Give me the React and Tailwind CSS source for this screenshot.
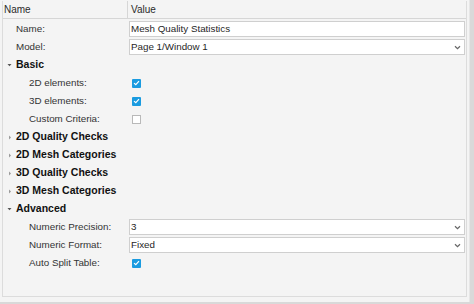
import React from 'react';

const font = { fontFamily: '"Liberation Sans", Arial, sans-serif' };

function Chevron() {
  return (
    <svg width="7" height="5" viewBox="0 0 7 5" className="mr-[3px] shrink-0">
      <path d="M1 1.2 L3.5 3.6 L6 1.2" fill="none" stroke="#666" strokeWidth="1.2" />
    </svg>
  );
}

function Check({ checked }) {
  if (!checked) {
    return <div className="ml-[3px] h-[9px] w-[9px] border border-[#b9b9b9] bg-white" />;
  }
  return (
    <div className="ml-[3px] flex h-[9px] w-[9px] items-center justify-center rounded-[1px] bg-[#1a9be0]">
      <svg width="7" height="6" viewBox="0 0 7 6">
        <path d="M1 3.1 L2.8 4.7 L6 1.2" fill="none" stroke="#fff" strokeWidth="1.2" />
      </svg>
    </div>
  );
}

function Field({ value, select }) {
  return (
    <div className="flex h-[16px] flex-1 items-center justify-between border border-[#cfcfcf] bg-white pl-[1px] text-[9.8px] text-[#1f1f1f]">
      <span>{value}</span>
      {select && <Chevron />}
    </div>
  );
}

function Row({ label, indent, children }) {
  return (
    <div className="flex h-[18px] items-center">
      <div className={`w-[126px] shrink-0 text-[9.8px] text-[#333] ${indent ? 'pl-[26px]' : 'pl-[13px]'}`}>{label}</div>
      <div className="flex flex-1 items-center pr-[1px]">{children}</div>
    </div>
  );
}

function Group({ title, open }) {
  return (
    <div className="flex h-[18px] items-center">
      <div className="flex w-[13px] justify-center">
        {open ? (
          <svg width="5" height="4" viewBox="0 0 5 4"><path d="M0.5 1 L4.5 1 L2.5 3.2 Z" fill="#555" /></svg>
        ) : (
          <svg width="4" height="5" viewBox="0 0 4 5"><path d="M1 0.5 L3 2.5 L1 4.5 Z" fill="#999" /></svg>
        )}
      </div>
      <span className="text-[10.5px] font-bold text-[#111]">{title}</span>
    </div>
  );
}

export default function App() {
  return (
    <div style={font} className="h-[304px] w-[474px] bg-[#d9d9d9]">
      <div className="h-[302px] w-[470px] border-r border-[#e6e6e6] bg-[#f4f4f4] pl-[2px] pt-[1px]">
        <div className="h-[296px] w-[465px] border-b border-l border-r border-[#dcdcdc] border-t-[#e2e2e2]">
          <div className="flex h-[18px] items-center border-b border-[#d6d6d6] text-[10px] text-[#2b2b2b]">
            <div className="flex h-full w-[125px] items-center border-r border-[#d6d6d6] pl-[1px]">Name</div>
            <div className="pl-[3px]">Value</div>
          </div>
          <div className="pt-[1px]">
            <Row label="Name:"><Field value="Mesh Quality Statistics" /></Row>
            <Row label="Model:"><Field value="Page 1/Window 1" select /></Row>
            <Group title="Basic" open />
            <Row label="2D elements:" indent><Check checked /></Row>
            <Row label="3D elements:" indent><Check checked /></Row>
            <Row label="Custom Criteria:" indent><Check /></Row>
            <Group title="2D Quality Checks" />
            <Group title="2D Mesh Categories" />
            <Group title="3D Quality Checks" />
            <Group title="3D Mesh Categories" />
            <Group title="Advanced" open />
            <Row label="Numeric Precision:" indent><Field value="3" select /></Row>
            <Row label="Numeric Format:" indent><Field value="Fixed" select /></Row>
            <Row label="Auto Split Table:" indent><Check checked /></Row>
          </div>
        </div>
      </div>
    </div>
  );
}
